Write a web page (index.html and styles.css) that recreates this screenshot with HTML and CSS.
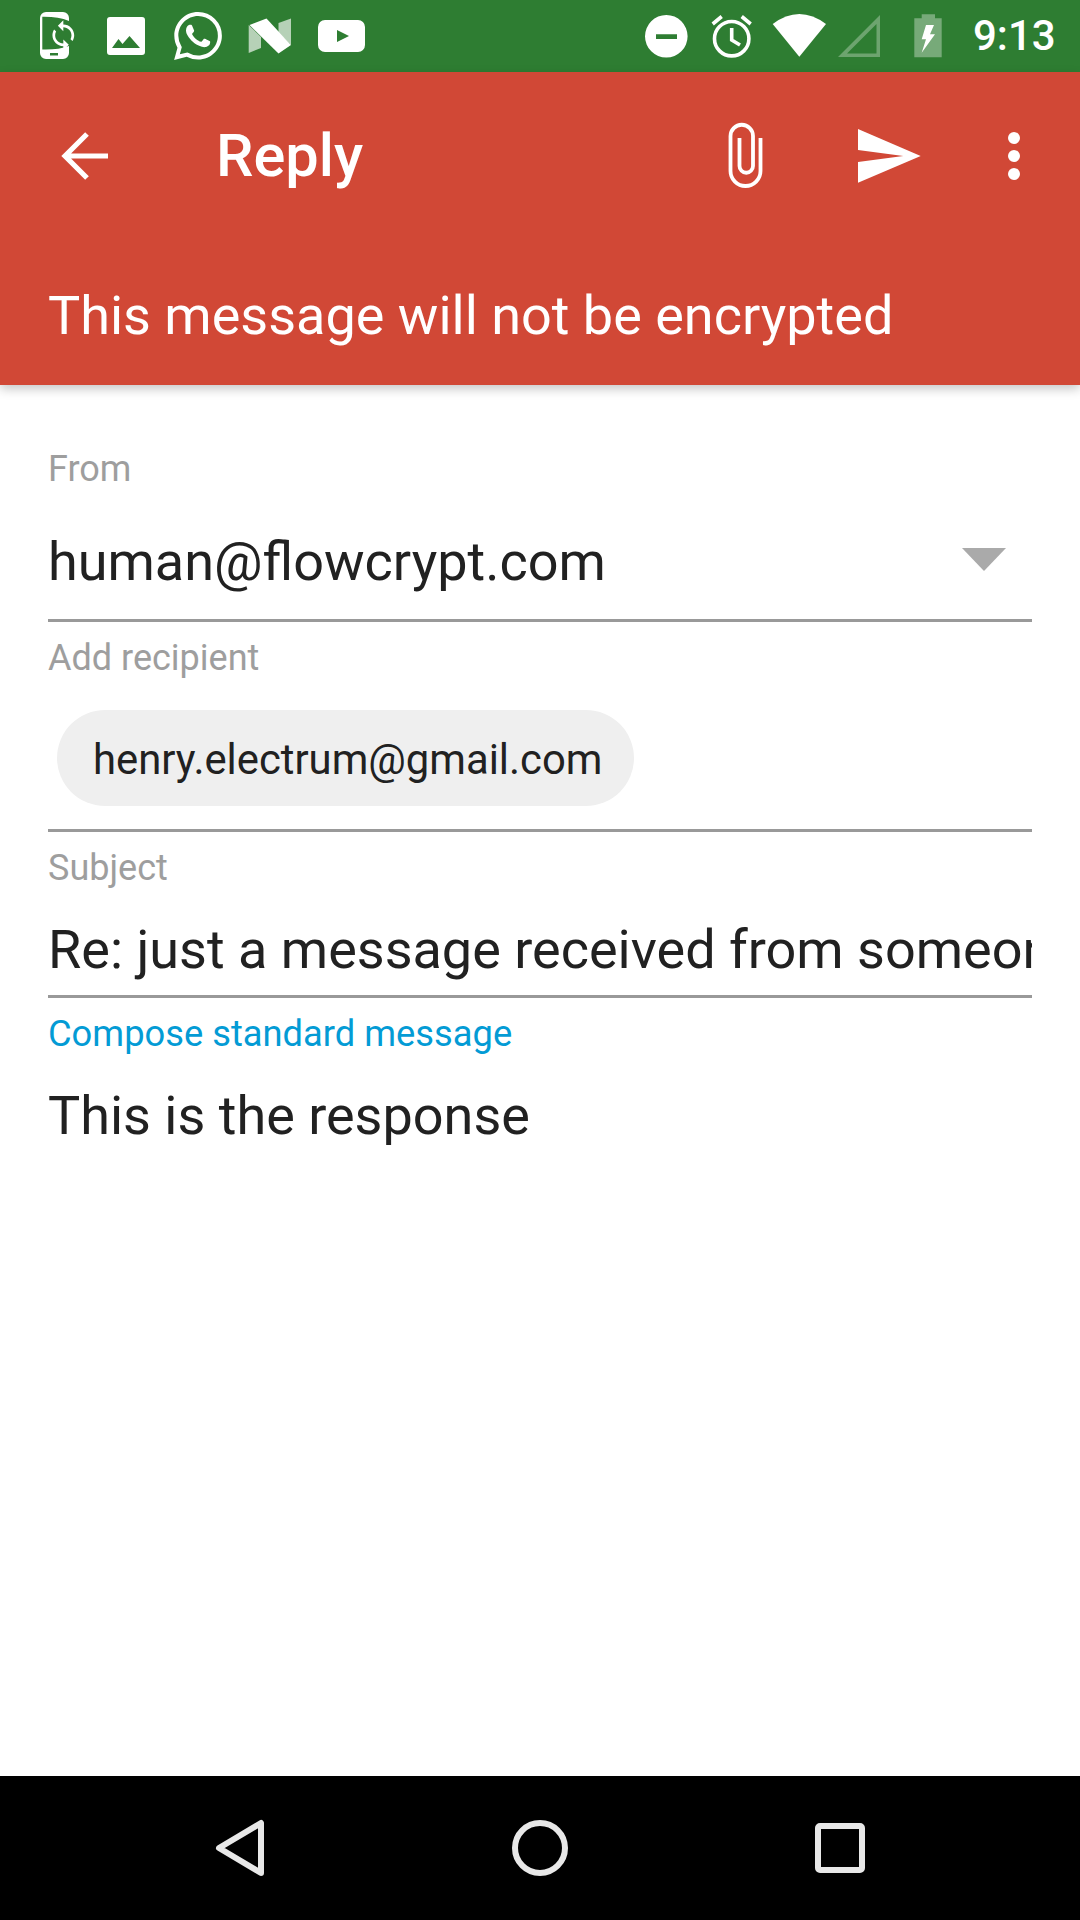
FILE: index.html
```html
<!DOCTYPE html>
<html lang="en">
<head>
<meta charset="utf-8">
<title>Reply</title>
<link rel="stylesheet" href="styles.css">
</head>
<body>
<div class="screen">
  <div class="status">
    <div class="status-icons left">
      <svg width="60" height="72" viewBox="30 0 60 72"><path fill="#fff" fill-rule="evenodd" d="M46 12H63a6 6 0 0 1 6 6V21Q58 16.500 42.300 16.800V49.500Q58 50 69 46V53a6 6 0 0 1-6 6H46a6 6 0 0 1-6-6V18a6 6 0 0 1 6-6zM50 53v2.500h8V53z"/><path transform="translate(47 19) scale(1.360)" fill="#fff" d="M12 4V1L8 5l4 4V6c3.310 0 6 2.690 6 6 0 1.010-.250 1.970-.700 2.800l1.460 1.460C19.540 15.030 20 13.570 20 12c0-4.420-3.580-8-8-8zm0 14c-3.310 0-6-2.690-6-6 0-1.010.250-1.970.700-2.800L5.240 7.740C4.460 8.970 4 10.430 4 12c0 4.420 3.580 8 8 8v3l4-4-4-4v3z"/></svg>
      <svg width="70" height="72" viewBox="90 0 70 72"><path fill="#fff" fill-rule="evenodd" d="M110 17h32a3 3 0 0 1 3 3v32a3 3 0 0 1-3 3h-32a3 3 0 0 1-3-3V20a3 3 0 0 1 3-3zM112 48h28l-10.500-12-7 8-4-5z"/></svg>
      <svg width="75" height="72" viewBox="160 0 75 72"><path transform="translate(174 12) scale(2)" fill="#fff" d="M17.472 14.382c-.297-.149-1.758-.867-2.030-.967-.273-.099-.471-.148-.670.150-.197.297-.767.966-.940 1.164-.173.199-.347.223-.644.075-.297-.150-1.255-.463-2.390-1.475-.883-.788-1.480-1.761-1.653-2.059-.173-.297-.018-.458.130-.606.134-.133.298-.347.446-.520.149-.174.198-.298.298-.497.099-.198.050-.371-.025-.520-.075-.149-.669-1.612-.916-2.207-.242-.579-.487-.500-.669-.510-.173-.008-.371-.010-.570-.010-.198 0-.520.074-.792.372-.272.297-1.040 1.016-1.040 2.479 0 1.462 1.065 2.875 1.213 3.074.149.198 2.096 3.200 5.077 4.487.709.306 1.262.489 1.694.625.712.227 1.360.195 1.871.118.571-.085 1.758-.719 2.006-1.413.248-.694.248-1.289.173-1.413-.074-.124-.272-.198-.570-.347m-5.421 7.403h-.004a9.870 9.870 0 0 1-5.031-1.378l-.361-.214-3.741.982.998-3.648-.235-.374a9.860 9.860 0 0 1-1.510-5.260c.001-5.450 4.436-9.884 9.888-9.884 2.640 0 5.122 1.030 6.988 2.898a9.825 9.825 0 0 1 2.893 6.994c-.003 5.450-4.437 9.884-9.885 9.884m8.413-18.297A11.815 11.815 0 0 0 12.050 0C5.495 0 .160 5.335.157 11.892c0 2.096.547 4.142 1.588 5.945L.057 24l6.305-1.654a11.882 11.882 0 0 0 5.683 1.448h.005c6.554 0 11.890-5.335 11.893-11.893a11.821 11.821 0 0 0-3.480-8.413z"/></svg>
      <svg width="70" height="72" viewBox="235 0 70 72"><path fill="#fff" opacity=".65" d="M248.700 25 261 37v11l-12.300 5zM291 18.500V45l-12.500-13v-9z"/><path fill="#fff" d="M249.500 25 266.500 18.500 291 45 278.500 53.500z"/></svg>
      <svg width="70" height="72" viewBox="305 0 70 72"><path fill="#fff" fill-rule="evenodd" d="M325 20h33a7 7 0 0 1 7 7v18a7 7 0 0 1-7 7h-33a7 7 0 0 1-7-7V27a7 7 0 0 1 7-7zM337 30v12l12-6z"/></svg>
    </div>
    <div class="status-icons">
      <svg width="66" height="72" viewBox="634 0 66 72"><path fill="#fff" fill-rule="evenodd" d="M666.300 15a21.300 21.300 0 1 1 0 42.600 21.300 21.300 0 0 1 0-42.600zM656 34.300V39h21v-4.700z"/></svg>
      <svg width="63" height="72" viewBox="700 0 63 72"><g fill="none" stroke="#fff" stroke-width="3.600"><circle cx="731.700" cy="38.700" r="17.200"/><path d="M712.700 24l9-7.500M750.700 24l-9-7.500"/><path d="M731.700 28V40l8.300 5"/></g></svg>
      <svg width="69" height="72" viewBox="763 0 69 72"><path fill="#fff" d="M772.700 24Q799.300 4 826 24L799.300 56.700z"/></svg>
      <svg width="64" height="72" viewBox="832 0 64 72"><path fill="#fff" opacity=".3" fill-rule="evenodd" d="M838 57 880 15V57zM847 53.500H876.500V24z"/></svg>
      <svg width="64" height="72" viewBox="896 0 64 72"><path fill="#fff" opacity=".35" d="M921.700 14.300H935V18.300H941.700V57.300H914.300V18.300H921.700z"/><path fill="#fff" d="M926 25H934L930 34.300H935L921.700 52.700 926 39.300H921.700z"/></svg>
    </div>
    <span class="time">9:13</span>
  </div>

  <header class="appbar">
    <div class="toolbar">
      <svg class="back" width="60" height="60" viewBox="54 126 60 60"><path fill="none" stroke="#fff" stroke-width="5.200" d="M108 156H65M87 134 65 156l22 22"/></svg>
      <h1 class="title">Reply</h1>
      <svg class="clip" width="48" height="80" viewBox="722 116 48 80"><path fill="none" stroke="#fff" stroke-width="3.800" d="M760.500 138V171A15 15 0 0 1 730.500 171V136A11.250 11.250 0 0 1 753 136V166A6.750 6.750 0 0 1 739.500 166V138"/></svg>
      <svg class="send" width="72" height="64" viewBox="854 124 72 64"><path fill="#fff" d="M858 129 920.700 156 858 182.700V162L903.300 156 858 150z"/></svg>
      <svg class="more" width="24" height="60" viewBox="1002 126 24 60"><circle cx="1014" cy="138" r="6" fill="#fff"/><circle cx="1014" cy="156" r="6" fill="#fff"/><circle cx="1014" cy="174" r="6" fill="#fff"/></svg>
    </div>
    <p class="banner">This message will not be encrypted</p>
  </header>

  <main class="form">
    <section class="field field-from">
      <label class="label">From</label>
      <div class="select">
        <span class="value">human@flowcrypt.com</span>
        <svg class="caret" width="44" height="24" viewBox="0 0 44 24"><path fill="#aaa" d="M0 0H44L22 23z"/></svg>
      </div>
    </section>
    <section class="field field-to">
      <label class="label">Add recipient</label>
      <span class="chip">henry.electrum@gmail.com</span>
    </section>
    <section class="field field-subject">
      <label class="label">Subject</label>
      <div class="value clipped">Re: just a message received from someone</div>
    </section>
    <label class="label link">Compose standard message</label>
    <p class="value body-text">This is the response</p>
  </main>

  <nav class="navbar">
    <svg width="72" height="72" viewBox="204 1812 72 72"><path fill="none" stroke="#e8e8e8" stroke-width="6" stroke-linejoin="round" d="M261 1823V1873L219 1848z"/></svg>
    <svg width="72" height="72" viewBox="504 1812 72 72"><circle cx="540" cy="1848" r="25" fill="none" stroke="#e8e8e8" stroke-width="6"/></svg>
    <svg width="72" height="72" viewBox="804 1812 72 72"><rect x="818" y="1826" width="44" height="44" rx="2" fill="none" stroke="#e8e8e8" stroke-width="6"/></svg>
  </nav>
</div>
</body>
</html>
```

FILE: styles.css
```css
* { box-sizing: border-box; }
html, body { margin: 0; padding: 0; }
body { font-family: Roboto, "Noto Sans", sans-serif; background: #fff; }
.screen { width: 1080px; height: 1920px; display: flex; flex-direction: column; overflow: hidden; }

.status { height: 72px; flex: none; background: #2e7d32; display: flex; align-items: center; padding-left: 30px; color: #fff; }
.status-icons { display: flex; }
.status-icons.left { margin-right: 259px; }
.status svg { display: block; }
.time { font-size: 42px; font-weight: 500; margin-left: 13px; line-height: 72px; }

.appbar { height: 313px; flex: none; background: #d14836; color: #fff; box-shadow: 0 4px 10px rgba(0,0,0,.22); position: relative; }
.toolbar { height: 168px; display: flex; align-items: center; }
.toolbar svg { display: block; flex: none; }
.back { margin-left: 54px; }
.title { margin: 2px 0 0 102px; font-size: 59.5px; font-weight: 500; flex: 1; line-height: 1; }
.clip { margin-right: 84px; }
.send { margin-right: 76px; }
.more { margin-right: 54px; }
.banner { margin: 0; padding: 46px 48px 0; font-size: 54px; line-height: 60px; }

.form { flex: 1; padding: 0 48px; display: flex; flex-direction: column; }
.field { border-bottom: 3px solid #999; }
.label { display: block; font-size: 36px; line-height: 44px; color: #9e9e9e; }
.value { font-size: 54px; line-height: 60px; color: #212121; }
.field-from { height: 237px; padding-top: 62px; }
.select { display: flex; justify-content: space-between; align-items: center; margin-top: 41px; padding-right: 26px; }
.caret { display: block; margin-bottom: 4px; }
.field-to { height: 210px; padding-top: 14px; }
.chip { display: inline-block; margin: 30px 0 0 9px; height: 96px; line-height: 100px; padding: 0 32px 0 36px; border-radius: 48px; background: #efefef; font-size: 41.8px; color: #212121; }
.field-subject { height: 166px; padding-top: 14px; }
.clipped { white-space: nowrap; overflow: hidden; margin-top: 30px; }
.link { color: #039bd5; margin-top: 14px; font-size: 36.3px; }
.body-text { margin: 30px 0 0; }

.navbar { height: 144px; flex: none; background: #000; display: flex; justify-content: center; align-items: center; gap: 228px; }
.navbar svg { display: block; }
```
